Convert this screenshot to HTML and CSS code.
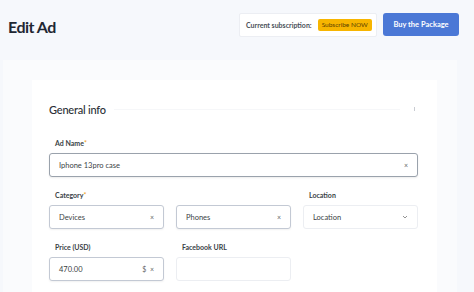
FILE: index.html
```html
<!DOCTYPE html>
<html>
<head>
<meta charset="utf-8">
<link rel="stylesheet" href="styles.css">
</head>
<body>
<div class="topbar">
  <h1 class="title">Edit Ad</h1>
  <div class="actions">
    <div class="sub-box">
      <span class="sub-label">Current subscription:</span>
      <span class="sub-badge">Subscribe NOW</span>
    </div>
    <button class="buy-btn">Buy the Package</button>
  </div>
</div>
<div class="outer">
  <div class="card">
    <div class="section-head">
      <span class="section-title">General info</span>
      <span class="section-line"></span>
      <span class="section-mark"></span>
    </div>
    <div class="field">
      <label class="lbl">Ad Name<span class="req">*</span></label>
      <div class="input strong"><span class="val">Iphone 13pro case</span><span class="x">×</span></div>
    </div>
    <div class="grid">
      <div class="field">
        <label class="lbl">Category<span class="req">*</span></label>
        <div class="input mid"><span class="val">Devices</span><span class="x">×</span></div>
      </div>
      <div class="field">
        <label class="lbl blank">&nbsp;</label>
        <div class="input mid"><span class="val">Phones</span><span class="x">×</span></div>
      </div>
      <div class="field">
        <label class="lbl">Location</label>
        <div class="input light"><span class="val">Location</span>
          <svg class="chev" width="6" height="4" viewBox="0 0 6 4"><path d="M1 1l2 2 2-2" fill="none" stroke="#888" stroke-width="0.9"/></svg>
        </div>
      </div>
    </div>
    <div class="grid">
      <div class="field">
        <label class="lbl">Price (USD)</label>
        <div class="input mid"><span class="val">470.00</span><span class="x">$&nbsp;&nbsp;×</span></div>
      </div>
      <div class="field">
        <label class="lbl">Facebook URL</label>
        <div class="input light"></div>
      </div>
      <div></div>
    </div>
  </div>
</div>
</body>
</html>
```
FILE: styles.css
```css
* { box-sizing: border-box; }
html, body { margin: 0; padding: 0; }
body {
  background: #f6f8fc;
  font-family: "Lato", "Noto Sans", sans-serif;
  color: #333;
  width: 474px;
  height: 292px;
  overflow: hidden;
}
.topbar {
  display: flex;
  align-items: flex-start;
  justify-content: space-between;
  padding: 13px 15px 0 8px;
  height: 60px;
}
.title {
  margin: 4px 0 0;
  font-size: 16px;
  font-weight: 700;
  color: #1f2733;
  letter-spacing: -0.5px;
  line-height: 20px;
}
.actions { display: flex; gap: 6px; }
.sub-box {
  display: flex;
  align-items: center;
  gap: 6px;
  height: 24px;
  width: 138px;
  background: #fff;
  border: 1px solid #eceef3;
  border-radius: 2px;
  padding: 0 6px;
}
.sub-label { font-size: 7px; font-weight: 700; color: #4a4f57; white-space: nowrap; }
.sub-badge {
  background: #f7b500;
  color: #5a4200;
  font-size: 6.5px;
  border-radius: 2px;
  padding: 0 4px;
  height: 12px;
  line-height: 12px;
  width: 55px;
  text-align: center;
  white-space: nowrap;
}
.buy-btn {
  width: 76px;
  height: 23px;
  border: 0;
  border-radius: 3px;
  background: #4b78d6;
  color: #fff;
  font-family: inherit;
  font-size: 7.5px;
  font-weight: 700;
  padding: 0;
}
.outer {
  margin: 0 17px 0 3px;
  background: #fafbfd;
  padding: 20px 20px 0 29px;
  height: 232px;
}
.card {
  background: #fff;
  padding: 22px 19px 0 17px;
  height: 212px;
}
.section-head {
  display: flex;
  align-items: center;
  height: 14px;
  margin-bottom: 22px;
}
.section-title { font-size: 11px; font-weight: 500; color: #2a2f36; letter-spacing: -0.2px; white-space: nowrap; }
.section-line { flex: 1; height: 1px; background: #f6f7f9; margin: 0 14px 0 8px; }
.section-mark { width: 1px; height: 4px; background: #c9ccd2; margin-right: 3px; }
.field { display: flex; flex-direction: column; }
.lbl {
  font-size: 7px;
  font-weight: 700;
  color: #3a3f46;
  height: 10px;
  line-height: 10px;
  margin: 0 0 5px 6px;
}
.req { color: #f0a020; font-weight: 400; }
.input {
  height: 24px;
  border-radius: 3px;
  display: flex;
  align-items: center;
  justify-content: space-between;
  padding: 0 9px;
  width: 369px;
  background: #fff;
}
.grid .input { width: 115px; }
.input.strong { border: 1px solid #9aa2ac; box-shadow: 0 1px 2px rgba(0,0,0,0.08); }
.input.mid { border: 1px solid #c3c9d4; box-shadow: 0 1px 2px rgba(0,0,0,0.06); }
.input.light { border: 1px solid #eceef2; }
.val { font-size: 7.5px; color: #3b3f45; }
.x { font-size: 7px; color: #666; }
.chev { display: block; }
.grid {
  display: grid;
  grid-template-columns: 115px 115px 115px;
  column-gap: 12px;
  margin-top: 13px;
}
```
